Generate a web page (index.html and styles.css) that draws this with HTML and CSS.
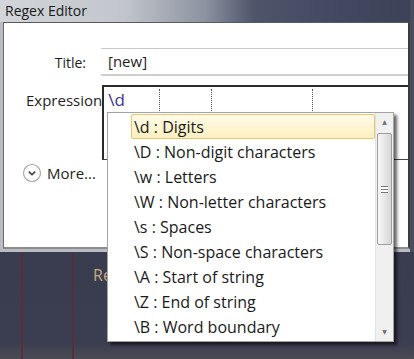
FILE: index.html
```html
<!DOCTYPE html>
<html lang="en">
<head>
  <meta charset="UTF-8" />
  <title>Regex Editor</title>
  <link rel="stylesheet" href="styles.css">
</head>
<body>
  <div class="window">
    <div class="titlebar">Regex Editor</div>
    <div class="client">
      <div class="row row-title">
        <span class="label">Title:</span>
        <div class="input">[new]</div>
      </div>
      <div class="row row-expr">
        <span class="label label-expr">Expression</span>
        <div class="expr-box">
          <span class="expr-text">\d</span>
          <span class="guide guide-1"></span>
          <span class="guide guide-2"></span>
          <span class="guide guide-3"></span>
        </div>
      </div>
      <div class="more">
        <svg class="more-icon" width="20" height="20" viewBox="0 0 20 20">
          <circle cx="10" cy="10" r="8.5" fill="#fff" stroke="#a8a8a8" stroke-width="1.2"/>
          <path d="M6.8 8.6 L10 11.6 L13.2 8.6" fill="none" stroke="#444" stroke-width="1.6"/>
        </svg>
        <span>More...</span>
      </div>
    </div>
  </div>

  <div class="app">
    <span class="stripe stripe-1"></span>
    <span class="stripe stripe-2"></span>
    <span class="app-text">Re</span>
  </div>

  <div class="popup">
    <ul class="list">
      <li class="item selected">\d : Digits</li>
      <li class="item">\D : Non-digit characters</li>
      <li class="item">\w : Letters</li>
      <li class="item">\W : Non-letter characters</li>
      <li class="item">\s : Spaces</li>
      <li class="item">\S : Non-space characters</li>
      <li class="item">\A : Start of string</li>
      <li class="item">\Z : End of string</li>
      <li class="item">\B : Word boundary</li>
    </ul>
    <div class="scrollbar">
      <div class="arrow">&#9650;</div>
      <div class="thumb"><span class="grip"></span></div>
      <div class="track"></div>
      <div class="arrow">&#9660;</div>
    </div>
  </div>
</body>
</html>
```

FILE: styles.css
```css
body {
  margin: 0;
  width: 414px;
  height: 359px;
  overflow: hidden;
  position: relative;
  background: #3a3d4f;
  font-family: "Open Sans", "DejaVu Sans", sans-serif;
  color: #1e1e1e;
}

.window {
  height: 252px;
  background: #b9bcc3;
  border-right: 4px solid #4a4d5c;
  display: flex;
  flex-direction: column;
}

.titlebar {
  height: 22px;
  line-height: 22px;
  padding-left: 5px;
  font-size: 14px;
  color: #1a1a1a;
  background: linear-gradient(to right, #d2d5d9 0%, #c2c6cc 30%, #8c92a0 50%, #4e556b 62%, #434a61 80%, #3c4258 100%);
}

.client {
  flex: 1;
  margin: 0 0 3px 3px;
  background: #fff;
  border-top: 1px solid #5a5a5a;
  border-left: 1px solid #6b6b6b;
  border-right: 2px solid #3c3c44;
  border-bottom: 2px solid #8c8c8c;
  position: relative;
}

.row {
  display: flex;
  align-items: center;
}

.row-title {
  margin-top: 25px;
}

.label {
  width: 82px;
  text-align: right;
  font-size: 14px;
  flex-shrink: 0;
}

.input {
  margin-left: 15px;
  flex: 1;
  height: 25px;
  line-height: 25px;
  padding-left: 7px;
  font-size: 15px;
  border-top: 1px solid #c9c9c9;
  border-bottom: 2px solid #cfcfcf;
}

.row-expr {
  margin-top: 9px;
  align-items: flex-start;
}

.label-expr {
  width: auto;
  margin-left: 22px;
  margin-top: 5px;
  font-size: 15px;
  text-align: left;
}

.expr-box {
  margin-left: 0;
  flex: 1;
  height: 72px;
  border-top: 2px solid #2b2b2b;
  border-left: 2px solid #2b2b2b;
  border-bottom: 1px solid #444;
  background: #fff;
  position: relative;
}

.expr-text {
  display: inline-block;
  margin-left: 4px;
  margin-top: 1px;
  font-size: 17px;
  color: #3b3492;
}

.guide {
  position: absolute;
  top: 2px;
  height: 26px;
  border-left: 1px dotted #555;
}

.guide-1 { left: 55px; }
.guide-2 { left: 107px; }
.guide-3 { left: 208px; }

.more {
  display: flex;
  align-items: center;
  gap: 5px;
  margin-left: 18px;
  margin-top: 3px;
  font-size: 15px;
}

.app {
  position: relative;
  height: 107px;
  background: linear-gradient(to bottom, #3a3d4f 0%, #3b3e50 85%, #4a4b55 100%);
}

.stripe {
  position: absolute;
  top: 0;
  bottom: 0;
  width: 2px;
  background: #55303c;
}

.stripe-1 { left: 21px; }
.stripe-2 { left: 72px; }

.app-text {
  position: absolute;
  left: 93px;
  top: 12px;
  font-size: 16px;
  color: #c4ab7e;
}

.popup {
  position: absolute;
  left: 107px;
  top: 112px;
  width: 285px;
  height: 228px;
  background: #fff;
  border: 1px solid #a3a3a3;
  box-shadow: 3px 3px 3px rgba(0, 0, 0, 0.6);
  display: flex;
}

.list {
  list-style: none;
  margin: 0;
  padding: 1px 0 0 23px;
  flex: 1;
}

.item {
  height: 25px;
  line-height: 24px;
  padding-left: 2px;
  font-size: 16px;
  color: #1a1a1a;
  white-space: nowrap;
  box-sizing: border-box;
  border: 1px solid transparent;
}

.item.selected {
  background: linear-gradient(to bottom, #fffbe8, #fcefbf);
  border-color: #e6c66c;
  border-radius: 2px;
  margin-right: 0;
}

.scrollbar {
  width: 17px;
  background: #f0f0f0;
  border-left: 1px solid #e2e2e2;
  display: flex;
  flex-direction: column;
}

.arrow {
  height: 18px;
  line-height: 18px;
  text-align: center;
  font-size: 6px;
  color: #6a6a6a;
}

.thumb {
  height: 110px;
  margin: 2px 1px 0 1px;
  border: 1px solid #9d9d9d;
  border-radius: 2px;
  background: linear-gradient(to right, #f6f6f6, #e4e4e4 60%, #d6d6d6);
  display: flex;
  align-items: center;
  justify-content: center;
}

.grip {
  width: 7px;
  height: 5px;
  border-top: 1px solid #777;
  border-bottom: 1px solid #777;
  background: linear-gradient(#fff 0 2px, #777 2px 3px, #fff 3px);
}

.track {
  flex: 1;
}
```
